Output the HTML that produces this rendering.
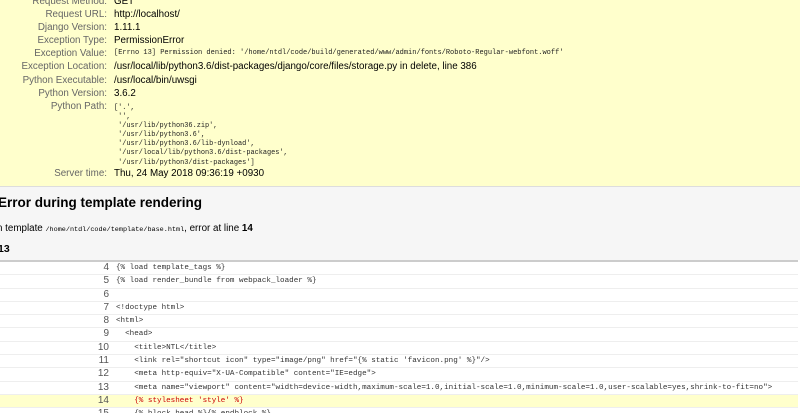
<!DOCTYPE html>
<html><head><style>
*{margin:0;padding:0;box-sizing:border-box}
html,body{overflow:hidden}
body{width:800px;height:413px;background:#fff;font-family:"Liberation Sans",Arial,sans-serif;position:relative}
#summary{position:absolute;left:0;top:0;width:800px;height:187px;background:#ffffcc;border-bottom:1px solid #ddd;overflow:hidden}
.r{position:absolute;font-size:9.8px;line-height:13px;white-space:pre}
.l{right:693px;color:#666;text-align:right}
.v{left:114px;color:#000}
.m{font-family:"Liberation Mono",monospace;font-size:6.9px;line-height:9.1px;color:#222}
#tpl{position:absolute;left:0;top:187px;width:800px;height:73px;background:#f6f6f6}
h2{position:absolute;left:-2px;top:194px;font-size:13.5px;line-height:18px;font-weight:bold;color:#000}
#code{position:absolute;left:0;top:260px;width:798px;border-top:2px solid #ccc;overflow:hidden}
.row{height:13.3px;border-bottom:1px solid #eee;position:relative;font-family:"Liberation Mono",monospace;font-size:7.6px;line-height:12.5px;white-space:pre;color:#333}
.row .n{position:absolute;right:689px;font-family:"Liberation Sans",Arial,sans-serif;font-size:10px;color:#555}
.row .c{position:absolute;left:116px}
.hl{background:#ffffcc}
.hl .c{color:#c00}
</style></head><body>
<div id="summary">
<div class="r l" style="top:-5px">Request Method:</div><div class="r v" style="top:-5px">GET</div>
<div class="r l" style="top:8px">Request URL:</div><div class="r v" style="top:8px">http://localhost/</div>
<div class="r l" style="top:21px">Django Version:</div><div class="r v" style="top:21px">1.11.1</div>
<div class="r l" style="top:34px">Exception Type:</div><div class="r v" style="top:34px">PermissionError</div>
<div class="r l" style="top:47px">Exception Value:</div><div class="r v m" style="top:49px;font-size:7px">[Errno 13] Permission denied: '/home/ntdl/code/build/generated/www/admin/fonts/Roboto-Regular-webfont.woff'</div>
<div class="r l" style="top:60px">Exception Location:</div><div class="r v" style="top:60px">/usr/local/lib/python3.6/dist-packages/django/core/files/storage.py in delete, line 386</div>
<div class="r l" style="top:74px">Python Executable:</div><div class="r v" style="top:74px">/usr/local/bin/uwsgi</div>
<div class="r l" style="top:87px">Python Version:</div><div class="r v" style="top:87px">3.6.2</div>
<div class="r l" style="top:100px">Python Path:</div><div class="r v m" style="top:104px">['.',
 '',
 '/usr/lib/python36.zip',
 '/usr/lib/python3.6',
 '/usr/lib/python3.6/lib-dynload',
 '/usr/local/lib/python3.6/dist-packages',
 '/usr/lib/python3/dist-packages']</div>
<div class="r l" style="top:167px">Server time:</div><div class="r v" style="top:167px">Thu, 24 May 2018 09:36:19 +0930</div>
</div>
<div id="tpl"></div>
<h2>Error during template rendering</h2>
<div class="r" style="left:-3px;top:222px;font-size:9.8px;color:#000">n template <span style="font-family:'Liberation Mono',monospace;font-size:6.8px">/home/ntdl/code/template/base.html</span>, error at line <b>14</b></div>
<div class="r" style="left:-2px;top:243px;font-size:10.5px;font-weight:bold">13</div>
<div id="code">
<div class="row"><span class="n">4</span><span class="c">{% load template_tags %}</span></div>
<div class="row"><span class="n">5</span><span class="c">{% load render_bundle from webpack_loader %}</span></div>
<div class="row"><span class="n">6</span><span class="c"></span></div>
<div class="row"><span class="n">7</span><span class="c">&lt;!doctype html&gt;</span></div>
<div class="row"><span class="n">8</span><span class="c">&lt;html&gt;</span></div>
<div class="row"><span class="n">9</span><span class="c">  &lt;head&gt;</span></div>
<div class="row"><span class="n">10</span><span class="c">    &lt;title&gt;NTL&lt;/title&gt;</span></div>
<div class="row"><span class="n">11</span><span class="c">    &lt;link rel="shortcut icon" type="image/png" href="{% static 'favicon.png' %}"/&gt;</span></div>
<div class="row"><span class="n">12</span><span class="c">    &lt;meta http-equiv="X-UA-Compatible" content="IE=edge"&gt;</span></div>
<div class="row"><span class="n">13</span><span class="c">    &lt;meta name="viewport" content="width=device-width,maximum-scale=1.0,initial-scale=1.0,minimum-scale=1.0,user-scalable=yes,shrink-to-fit=no"&gt;</span></div>
<div class="row hl"><span class="n">14</span><span class="c">    {% stylesheet 'style' %}</span></div>
<div class="row"><span class="n">15</span><span class="c">    {% block head %}{% endblock %}</span></div>
</div>
</body></html>
